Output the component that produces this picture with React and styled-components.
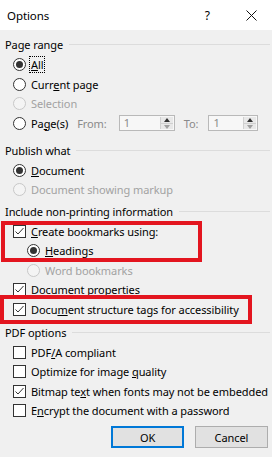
import React from 'react';
import styled, { createGlobalStyle, css } from 'styled-components';

const GlobalStyle = createGlobalStyle`
  html, body {
    margin: 0;
    padding: 0;
    background: #ffffff;
  }
  body {
    font-family: "Noto Sans", "Liberation Sans", sans-serif;
    font-size: 11px;
    letter-spacing: -0.08px;
    color: #000000;
  }
`;

const Dialog = styled.div`
  width: 276px;
  height: 457px;
  background: #ffffff;
  display: flex;
  flex-direction: column;
  overflow: hidden;
`;

const TitleBar = styled.div`
  height: 30px;
  display: flex;
  align-items: center;
  padding-left: 7px;
  flex-shrink: 0;
`;

const TitleText = styled.span`
  flex: 1;
  font-size: 11.5px;
`;

const HelpGlyph = styled.span`
  font-size: 12px;
  margin-right: 36px;
`;

const CloseIcon = styled.svg`
  width: 11px;
  height: 11px;
  margin-right: 19px;
`;

const Body = styled.div`
  flex: 1;
  background: #f0f0f0;
  margin-right: 4px;
  padding: 4px 2px 0 5px;
  display: flex;
  flex-direction: column;
`;

const Section = styled.div`
  margin-top: ${(p) => p.$top || 0}px;
  display: flex;
  flex-direction: column;
`;

const SectionHeader = styled.div`
  height: 21px;
  display: flex;
  align-items: center;
  gap: 6px;

  &::after {
    content: '';
    flex: 1;
    height: 1px;
    background: #dcdcdc;
  }
`;

const Row = styled.div`
  height: 19.5px;
  display: flex;
  align-items: center;
  gap: 5px;
  padding-left: ${(p) => p.$indent || 8}px;
`;

const Label = styled.span`
  color: ${(p) => (p.$disabled ? '#a2a2a2' : '#000000')};
  white-space: nowrap;
  ${(p) =>
    p.$focused &&
    css`
      outline: 1px dotted #000;
      outline-offset: 0;
      padding: 0 1px;
      margin-left: -1px;
    `}
`;

const Radio = styled.span`
  width: 13px;
  height: 13px;
  box-sizing: border-box;
  border-radius: 50%;
  border: 1px solid ${(p) => (p.$disabled ? '#c8c8c8' : '#333333')};
  background: ${(p) => (p.$disabled ? '#f4f4f4' : '#ffffff')};
  display: flex;
  align-items: center;
  justify-content: center;
  flex-shrink: 0;

  &::after {
    content: '';
    width: 7px;
    height: 7px;
    border-radius: 50%;
    background: ${(p) => (p.$checked ? '#333333' : 'transparent')};
  }
`;

const Box = styled.span`
  width: 13px;
  height: 13px;
  box-sizing: border-box;
  border: 1px solid #333333;
  background: #ffffff;
  display: flex;
  align-items: center;
  justify-content: center;
  flex-shrink: 0;
`;

const Checkbox = ({ checked }) => (
  <Box>
    {checked && (
      <svg width="11" height="11" viewBox="0 0 11 11">
        <polyline points="1.5,5.5 4,8 9.5,2" fill="none" stroke="#333" strokeWidth="1" />
      </svg>
    )}
  </Box>
);

const SubLabel = styled.span`
  color: #8a8a8a;
  margin-left: ${(p) => p.$gap || 0}px;
`;

const Spin = styled.div`
  display: flex;
  height: 16px;
  width: ${(p) => p.$width}px;
  box-sizing: border-box;
  border: 1px solid #b9b9b9;
  background: #f7f7f7;
  margin-left: ${(p) => p.$gap || 0}px;
`;

const SpinValue = styled.span`
  flex: 1;
  color: #8a8a8a;
  font-size: 11px;
  line-height: 14px;
  padding-left: 4px;
`;

const SpinButtons = styled.div`
  width: 12px;
  display: flex;
  flex-direction: column;
  border-left: 1px solid #d0d0d0;
  margin: 1px;
`;

const SpinButton = styled.div`
  flex: 1;
  display: flex;
  align-items: center;
  justify-content: center;
  background: #e8e8e8;
  border-bottom: ${(p) => (p.$top ? '1px solid #d0d0d0' : 'none')};
`;

const Arrow = ({ up }) => (
  <svg width="6" height="4" viewBox="0 0 6 4">
    <polygon points={up ? '0,4 6,4 3,0' : '0,0 6,0 3,4'} fill={up ? '#333' : '#a0a0a0'} />
  </svg>
);

const SpinBox = ({ width, gap }) => (
  <Spin $width={width} $gap={gap}>
    <SpinValue>1</SpinValue>
    <SpinButtons>
      <SpinButton $top>
        <Arrow up />
      </SpinButton>
      <SpinButton>
        <Arrow />
      </SpinButton>
    </SpinButtons>
  </Spin>
);

const Highlight = styled.div`
  position: relative;

  &::after {
    content: '';
    position: absolute;
    top: ${(p) => p.$top}px;
    left: ${(p) => p.$left}px;
    width: ${(p) => p.$width}px;
    height: ${(p) => p.$height}px;
    box-sizing: border-box;
    border: 4px solid #e3151f;
    pointer-events: none;
  }
`;

const ButtonRow = styled.div`
  margin-top: 5.5px;
  display: flex;
  justify-content: flex-end;
  gap: 11px;
  padding-right: 2px;
`;

const Button = styled.div`
  width: 73px;
  height: 22px;
  box-sizing: border-box;
  display: flex;
  align-items: center;
  justify-content: center;
  background: #e1e1e1;
  border: ${(p) => (p.$primary ? '2px solid #0078d7' : '1px solid #adadad')};
`;

export default function App() {
  return (
    <>
      <GlobalStyle />
      <Dialog>
        <TitleBar>
          <TitleText>Options</TitleText>
          <HelpGlyph>?</HelpGlyph>
          <CloseIcon viewBox="0 0 11 11">
            <path d="M0.5 0.5 L10.5 10.5 M10.5 0.5 L0.5 10.5" stroke="#111" strokeWidth="1" />
          </CloseIcon>
        </TitleBar>
        <Body>
          <Section>
            <SectionHeader>Page range</SectionHeader>
            <Row>
              <Radio $checked />
              <Label $focused><u>A</u>ll</Label>
            </Row>
            <Row>
              <Radio />
              <Label>Curr<u>e</u>nt page</Label>
            </Row>
            <Row>
              <Radio $disabled />
              <Label $disabled>Selection</Label>
            </Row>
            <Row>
              <Radio />
              <Label>Pa<u>g</u>e(s)</Label>
              <SubLabel $gap={4}>From:</SubLabel>
              <SpinBox width={56} gap={7} />
              <SubLabel $gap={4}>To:</SubLabel>
              <SpinBox width={50} gap={5} />
            </Row>
          </Section>

          <Section $top={6.5}>
            <SectionHeader>Publish what</SectionHeader>
            <Row>
              <Radio $checked />
              <Label><u>D</u>ocument</Label>
            </Row>
            <Row>
              <Radio $disabled />
              <Label $disabled>Document showing markup</Label>
            </Row>
          </Section>

          <Section $top={1}>
            <SectionHeader>Include non-printing information</SectionHeader>
            <Highlight $top={-0.5} $left={-4} $width={201} $height={41}>
              <Row>
                <Checkbox checked />
                <Label><u>C</u>reate bookmarks using:</Label>
              </Row>
              <Row $indent={22}>
                <Radio $checked />
                <Label><u>H</u>eadings</Label>
              </Row>
            </Highlight>
            <Row $indent={22}>
              <Radio $disabled />
              <Label $disabled>Word bookmarks</Label>
            </Row>
            <Row>
              <Checkbox checked />
              <Label>Document properties</Label>
            </Row>
            <Highlight $top={-5} $left={-5} $width={252} $height={29}>
              <Row>
                <Checkbox checked />
                <Label>Docu<u>m</u>ent structure tags for accessibility</Label>
              </Row>
            </Highlight>
          </Section>

          <Section $top={2.5}>
            <SectionHeader>PDF options</SectionHeader>
            <Row>
              <Checkbox />
              <Label>PDF<u>/</u>A compliant</Label>
            </Row>
            <Row>
              <Checkbox />
              <Label>Optimize for image <u>q</u>uality</Label>
            </Row>
            <Row>
              <Checkbox checked />
              <Label>Bitmap te<u>x</u>t when fonts may not be embedded</Label>
            </Row>
            <Row>
              <Checkbox />
              <Label>E<u>n</u>crypt the document with a password</Label>
            </Row>
          </Section>

          <ButtonRow>
            <Button $primary>OK</Button>
            <Button>Cancel</Button>
          </ButtonRow>
        </Body>
      </Dialog>
    </>
  );
}
